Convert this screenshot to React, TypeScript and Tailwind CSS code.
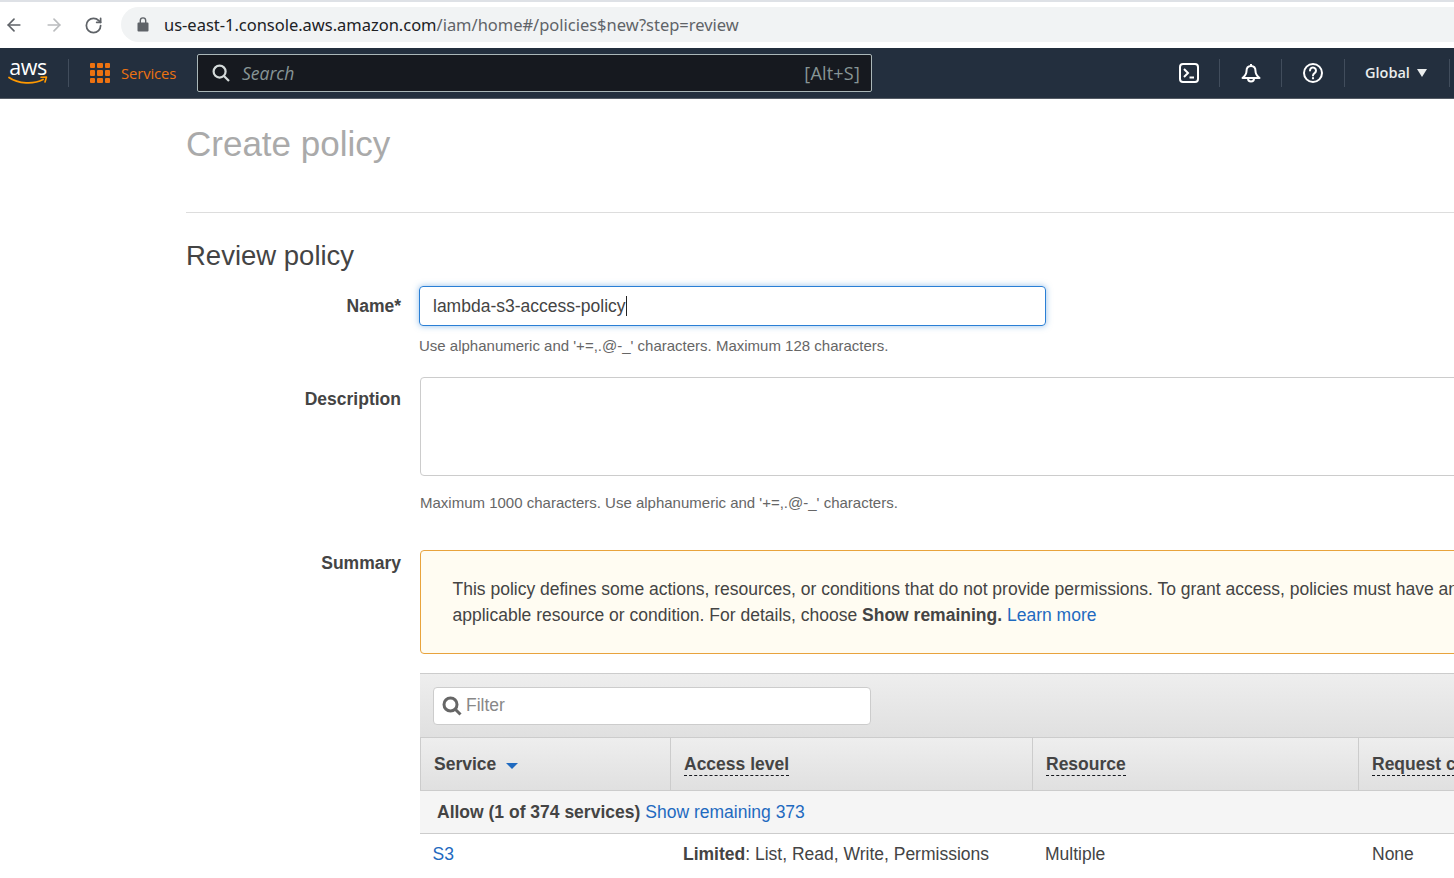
import { ArrowLeft, ArrowRight, RotateCw } from "lucide-react";

const Divider = () => <div className="w-px h-7 bg-[#414d5c]" />;

const AwsLogo = () => (
  <div className="relative w-[40px] h-[28px] shrink-0">
    <span className="block -mt-[3px] font-['Open_Sans',sans-serif] text-[21.5px] leading-[18px] text-white tracking-[-0.5px] text-center">aws</span>
    <svg viewBox="0 0 40 10" className="absolute left-0 top-[18px] w-[40px] h-[10px]" fill="none">
      <path d="M1 1.5C10 8 26 8.5 35 3.5" stroke="#ff9900" strokeWidth="1.8" strokeLinecap="round" />
      <path d="M33 1.2L38.5 1L37 6" stroke="#ff9900" strokeWidth="1.6" strokeLinecap="round" strokeLinejoin="round" />
    </svg>
  </div>
);

const ChromeBar = () => (
  <div className="h-[48px] bg-white border-t-2 border-[#dee1e6] flex items-center shrink-0">
    <div className="flex items-center gap-[20px] pl-[4px] text-[#5f6368]">
      <ArrowLeft size={20} strokeWidth={2} />
      <ArrowRight size={20} strokeWidth={2} className="text-[#babcbe]" />
      <RotateCw size={19} strokeWidth={2.2} />
    </div>
    <div className="ml-[18px] flex-1 h-[35px] bg-[#f1f3f4] rounded-l-full flex items-center pl-[16px] mt-[-1px]">
      <svg viewBox="0 0 12 15" className="w-[12px] h-[15px]" fill="#5f6368">
        <path d="M1.5 5.5h9a1 1 0 0 1 1 1v7a1 1 0 0 1-1 1h-9a1 1 0 0 1-1-1v-7a1 1 0 0 1 1-1z" />
        <path d="M3.3 6V3.6a2.7 2.7 0 0 1 5.4 0V6" fill="none" stroke="#5f6368" strokeWidth="1.4" />
      </svg>
      <span className="ml-[15px] mt-[1px] font-['Noto_Sans',sans-serif] text-[16.5px] tracking-[-0.02px]">
        <span className="text-[#202124]">us-east-1.console.aws.amazon.com</span>
        <span className="text-[#5f6368]">/iam/home#/policies$new?step=review</span>
      </span>
    </div>
  </div>
);

const TopNav = () => (
  <div className="h-[51px] bg-[#232f3e] border-b border-[#545b64] flex items-center shrink-0 font-['Open_Sans',sans-serif]">
    <div className="pl-[8px] pr-[20px]"><AwsLogo /></div>
    <Divider />
    <div className="grid grid-cols-3 gap-[2px] ml-[21px] w-[20px] h-[20px]">
      {Array.from({ length: 9 }).map((_, i) => (
        <span key={i} className="bg-[#ec7211] rounded-[1px]" />
      ))}
    </div>
    <span className="ml-[11px] text-[14.8px] text-[#ec7211] w-[66px] tracking-[-0.1px]">Services</span>
    <div className="ml-[10px] w-[675px] h-[38px] bg-[#16191f] border border-[#aab7b8] rounded-[2px] flex items-center pl-[14px] pr-[11px]">
      <svg viewBox="0 0 18 18" className="w-[18px] h-[18px]" fill="none" stroke="#d5dbdb" strokeWidth="2.2">
        <circle cx="7.6" cy="7.6" r="6" />
        <path d="M12 12l5 5" />
      </svg>
      <span className="ml-[12px] italic text-[17.5px] text-[#879596]">Search</span>
      <span className="ml-auto text-[18px] tracking-[0.2px] text-[#879596]">[Alt+S]</span>
    </div>
    <div className="ml-[307px] flex items-center">
      <svg viewBox="0 0 20 20" className="w-[20px] h-[20px]" fill="none" stroke="white" strokeWidth="2">
        <rect x="1" y="1" width="18" height="18" rx="3" />
        <path d="M5 6l4 4-4 4M10.5 14.5H15" />
      </svg>
      <div className="w-[20px]" />
      <Divider />
      <svg viewBox="0 0 20 20" className="w-[20px] h-[20px] ml-[21px] mr-[20px]" fill="none" stroke="white" strokeWidth="2" strokeLinejoin="round">
        <path d="M10 1v2M10 3c-3 0-4.500 2.200-4.500 5 0 3-1.500 5-4 7h17c-2.500-2-4-4-4-7 0-2.800-1.500-5-4.500-5z" />
        <path d="M7 15.500a3 3 0 0 0 6 0" />
      </svg>
      <Divider />
      <svg viewBox="0 0 20 20" className="w-[20px] h-[20px] mx-[21px]" fill="none" stroke="white" strokeWidth="2" strokeLinecap="round">
        <circle cx="10" cy="10" r="9" />
        <path d="M7 7.500a3 3 0 1 1 4.800 2.400c-1 .7-1.800 1.300-1.800 2.600" />
        <path d="M10 15.200v.1" strokeWidth="2.200" />
      </svg>
      <Divider />
      <span className="ml-[20px] text-[14.5px] font-semibold text-[#eaeded]">Global</span>
      <span className="ml-[7px] w-0 h-0 border-l-[5px] border-r-[5px] border-t-[8px] border-l-transparent border-r-transparent border-t-[#eaeded]" />
      <div className="ml-[22px]"><Divider /></div>
    </div>
  </div>
);

const Label = ({ children }: { children: string }) => (
  <div className="w-[215px] shrink-0 text-right font-bold text-[17.5px] leading-[20px] text-[#444]">{children}</div>
);

const Help = ({ children }: { children: string }) => (
  <p className="text-[15px] leading-[18px] text-[#666]">{children}</p>
);

const HeadCell = ({ children, w }: { children: string; w: string }) => (
  <div className={`${w} shrink-0 border-r border-[#ccc] pl-[13px] flex items-center`}>
    <span className="mt-[2px] pb-[1px] font-bold text-[17.5px] leading-[20px] text-[#444] border-b border-dashed border-[#16191f]">{children}</span>
  </div>
);

export default function App() {
  return (
    <div className="w-[1454px] h-[878px] overflow-hidden bg-white flex flex-col font-['Liberation_Sans',sans-serif]">
      <ChromeBar />
      <TopNav />
      <div className="pl-[186px] w-[1700px] text-[#444]">
        <h1 className="pt-[25px] h-[114px] text-[35px] leading-[40px] text-[#aaa] border-b border-[#ddd] w-[1400px]">Create policy</h1>
        <h2 className="mt-[26px] text-[27.5px] leading-[34px] text-[#444]">Review policy</h2>

        <div className="flex mt-[13px]">
          <div className="pt-[10px]"><Label>Name*</Label></div>
          <div className="ml-[18px]">
            <div className="w-[627px] h-[40px] border border-[#2a7fd5] rounded-[4px] shadow-[0_0_6px_rgba(42,127,213,0.5)] flex items-center pl-[13px] text-[17.5px] text-[#444]">
              lambda-s3-access-policy<span className="w-px h-[20px] bg-[#222]" />
            </div>
            <div className="mt-[11px]"><Help>Use alphanumeric and '+=,.@-_' characters. Maximum 128 characters.</Help></div>
          </div>
        </div>

        <div className="flex mt-[22px]">
          <div className="pt-[12px]"><Label>Description</Label></div>
          <div className="ml-[19px]">
            <div className="w-[1200px] h-[99px] border border-[#ccc] rounded-[4px]" />
            <div className="mt-[18px]"><Help>Maximum 1000 characters. Use alphanumeric and '+=,.@-_' characters.</Help></div>
          </div>
        </div>

        <div className="flex mt-[38px]">
          <div className="pt-[3px]"><Label>Summary</Label></div>
          <div className="ml-[19px] w-[1200px]">
            <div className="h-[104px] border border-[#e8a33d] rounded-[4px] bg-[#fffcf2] pl-[31.5px] pt-[25px] text-[17.5px] leading-[26px] text-[#444]">
              <p className="whitespace-nowrap">This policy defines some actions, resources, or conditions that do not provide permissions. To grant access, policies must have an action that has an</p>
              <p>applicable resource or condition. For details, choose <b>Show remaining.</b> <span className="text-[#1f6ac0]">Learn more</span></p>
            </div>

            <div className="mt-[19px] border-t border-[#ccc]">
              <div className="h-[63px] bg-gradient-to-b from-[#eeeeee] to-[#e0e0e0] flex items-center pl-[13px]">
                <div className="w-[438px] h-[38px] bg-white border border-[#ccc] rounded-[4px] flex items-center pl-[8px]">
                  <svg viewBox="0 0 20 20" className="w-[20px] h-[20px]" fill="none" stroke="#666" strokeWidth="3">
                    <circle cx="8.500" cy="8.500" r="6.500" />
                    <path d="M13 13l5.500 5.500" />
                  </svg>
                  <span className="ml-[4px] text-[17.5px] text-[#888]">Filter</span>
                </div>
              </div>
              <div className="h-[54px] flex border-t border-b border-[#ccc] bg-gradient-to-b from-[#eeeeee] to-[#e0e0e0] border-l">
                <div className="w-[250px] shrink-0 border-r border-[#ccc] pl-[13px] flex items-center">
                  <span className="font-bold text-[17.5px] text-[#444]">Service</span>
                  <span className="ml-[10px] mt-[3px] w-0 h-0 border-l-[6px] border-r-[6px] border-t-[6px] border-l-transparent border-r-transparent border-t-[#1f6ac0]" />
                </div>
                <HeadCell w="w-[362px]">Access level</HeadCell>
                <HeadCell w="w-[326px]">Resource</HeadCell>
                <HeadCell w="w-[300px]">Request condition</HeadCell>
              </div>
              <div className="h-[43px] bg-[#f5f5f5] border-b border-[#ccc] flex items-center pl-[17px] text-[17.5px] text-[#444]">
                <b>Allow (1 of 374 services)</b>
                <span className="ml-[5px] text-[#1f6ac0]">Show remaining 373</span>
              </div>
              <div className="flex pt-[8px] text-[17.5px] leading-[24px] text-[#444]">
                <span className="w-[263px] pl-[12.5px] text-[#1f6ac0]">S3</span>
                <span className="w-[362px]"><b>Limited</b>: List, Read, Write, Permissions</span>
                <span className="w-[327px]">Multiple</span>
                <span>None</span>
              </div>
            </div>
          </div>
        </div>
      </div>
    </div>
  );
}
